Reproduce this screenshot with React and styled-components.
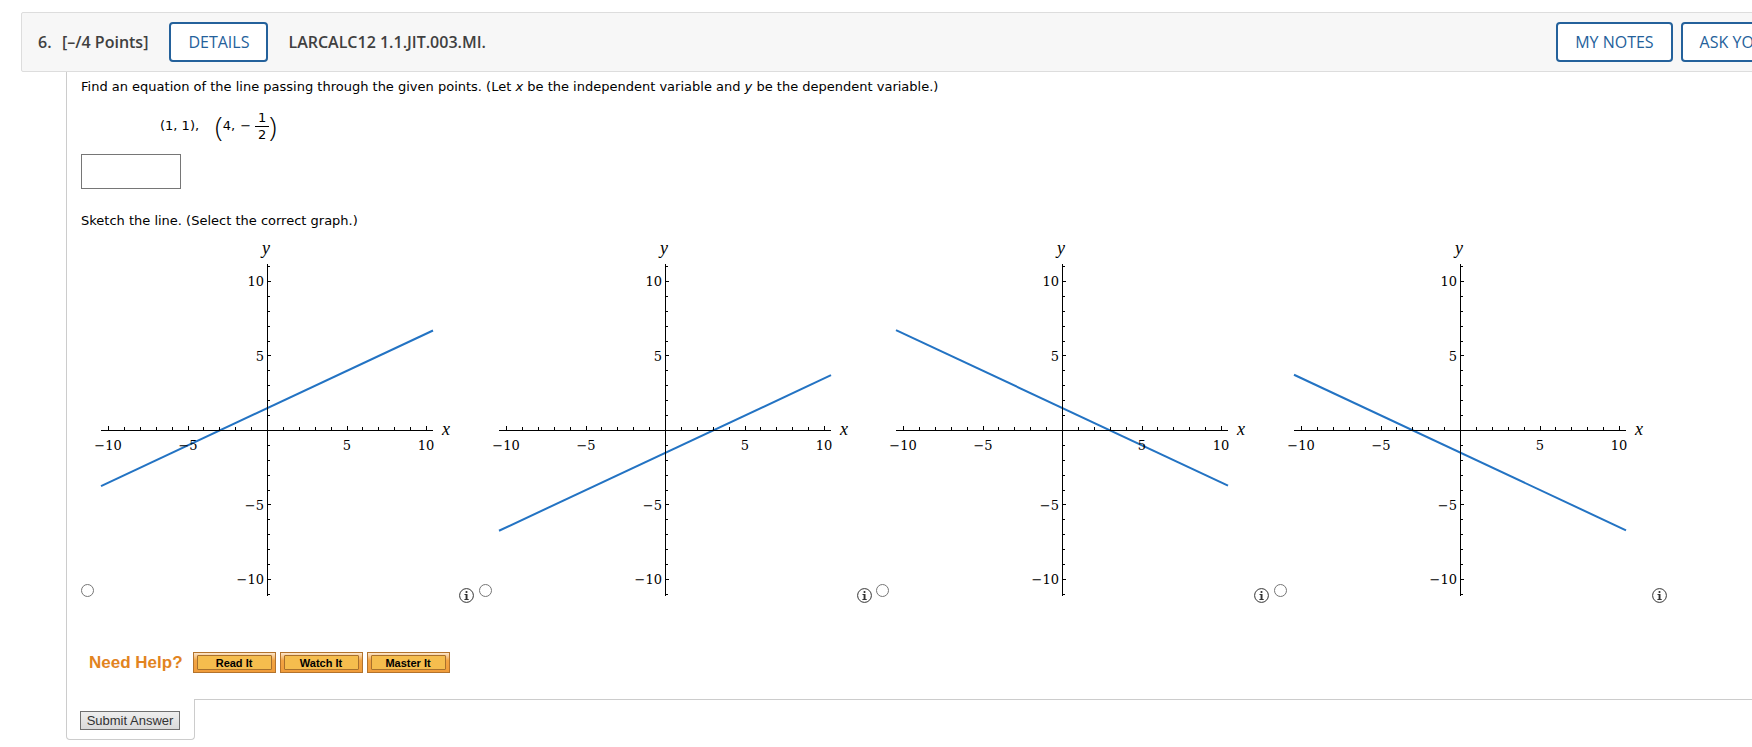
import React, {useState} from 'react'

import styled, {createGlobalStyle} from 'styled-components'

const GlobalStyle = createGlobalStyle`
    * {
        box-sizing: border-box;
    }

    body {
        margin: 0;
        background: #fff;
        color: #000;
        font-family: Verdana, "DejaVu Sans", sans-serif;
        font-size: 13px;
        line-height: 18px;
        overflow-x: hidden;
    }
`;

// slope and y-intercept of every choice
const choices = [
    {slope: 0.5, intercept: 1.5},
    {slope: 0.5, intercept: -1.5},
    {slope: -0.5, intercept: 1.5},
    {slope: -0.5, intercept: -1.5},
];

const units = Array.from({length: 23}, (_, i) => i - 11).filter((n) => n !== 0);
const xUnits = units.filter((n) => Math.abs(n) <= 10);
const labels = [-10, -5, 5, 10];

const toX = (n) => 173.5 + n * 15.9;
const toY = (n) => 189.4 - n * 14.9;
const snap = (n) => Math.floor(n) + 0.5;
const format = (n) => String(n).replace('-', '−');

const Graph = ({slope, intercept}) => {
    const lineY = (x) => toY(slope * x + intercept);
    return (
        <Plot width="365" height="370" viewBox="0 -8 365 370" aria-hidden="true">
            <line
                x1="7" y1={lineY(-10.47)} x2="339" y2={lineY(10.41)}
                stroke="#2373c3" strokeWidth="2"
            />
            <g stroke="#000" strokeWidth="1">
                <path d="M7 189.5H339M173.5 23V355" />
                {xUnits.map((n) => (
                    <path key={n} d={`M${snap(toX(n))} 189v${n % 5 ? -3 : -4}`} />
                ))}
                {units.map((n) => (
                    <path key={n} d={`M174 ${snap(toY(n))}h${n % 5 ? 2 : 3}`} />
                ))}
            </g>
            {labels.map((n) => (
                <text key={n} x={Math.floor(toX(n))} y="209" textAnchor="middle">{format(n)}</text>
            ))}
            {labels.map((n) => (
                <text key={n} x="170" y={Math.round(toY(n)) + 5} textAnchor="end">{format(n)}</text>
            ))}
            <AxisName x="168" y="13">y</AxisName>
            <AxisName x="348" y="194">x</AxisName>
        </Plot>
    )
}

const InfoIcon = () => (
    <svg width="15" height="15" viewBox="0 0 15 15" aria-hidden="true">
        <circle cx="7.5" cy="7.5" r="6.9" fill="none" stroke="#333" />
        <rect x="6.5" y="3" width="2" height="2" rx="0.8" fill="#333" />
        <path d="M5.5 6h3v5h1.2v1H5.4v-1h1.2V7H5.5z" fill="#333" />
    </svg>
)

const App = () => {
    const [answer, setAnswer] = useState('');
    const [picked, setPicked] = useState(null);
    return (
        <>
            <GlobalStyle />
            <Question>
                <Header>
                    <Number>6.</Number>
                    <Points>[–/4 Points]</Points>
                    <HeaderButton type="button">DETAILS</HeaderButton>
                    <Title>LARCALC12 1.1.JIT.003.MI.</Title>
                    <Tools>
                        <HeaderButton type="button">MY NOTES</HeaderButton>
                        <HeaderButton type="button">ASK YOUR TEACHER</HeaderButton>
                    </Tools>
                </Header>
                <Body>
                    <Prompt id="prompt">
                        Find an equation of the line passing through the given points. (Let <i>x</i> be
                        the independent variable and <i>y</i> be the dependent variable.)
                    </Prompt>
                    <GivenPoints>
                        <span>(1, 1),</span>
                        <Pair>
                            <Paren>(</Paren>
                            <span>4,</span>
                            <Minus>−</Minus>
                            <Fraction>
                                <span>1</span>
                                <Denominator>2</Denominator>
                            </Fraction>
                            <Paren>)</Paren>
                        </Pair>
                    </GivenPoints>
                    <AnswerBox
                        type="text"
                        aria-labelledby="prompt"
                        value={answer}
                        onChange={(e) => setAnswer(e.target.value)}
                    />
                    <Prompt id="sketch">Sketch the line. (Select the correct graph.)</Prompt>
                    <Choices role="radiogroup" aria-labelledby="sketch">
                        {choices.map((choice, i) => (
                            <Choice key={i}>
                                <Radio
                                    type="radio"
                                    name="graph"
                                    id={`graph-${i}`}
                                    aria-label={`Graph ${i + 1}`}
                                    checked={picked === i}
                                    onChange={() => setPicked(i)}
                                />
                                <label htmlFor={`graph-${i}`}>
                                    <Graph {...choice} />
                                </label>
                                <InfoButton type="button" aria-label="Graph description">
                                    <InfoIcon />
                                </InfoButton>
                            </Choice>
                        ))}
                    </Choices>
                    <Help>
                        <HelpTitle>Need Help?</HelpTitle>
                        <HelpButton type="button"><span>Read It</span></HelpButton>
                        <HelpButton type="button"><span>Watch It</span></HelpButton>
                        <HelpButton type="button"><span>Master It</span></HelpButton>
                    </Help>
                </Body>
                <Footer>
                    <SubmitTab>
                        <Submit type="button">Submit Answer</Submit>
                    </SubmitTab>
                    <Rule />
                </Footer>
            </Question>
        </>
    )
}

const Question = styled.main`
    padding: 12px 0 8px 21px;
`;

/* the toolbar runs on past the right edge of the window */
const Header = styled.header`
    display: flex;
    align-items: center;
    height: 60px;
    margin-right: -132px;
    padding: 0 16px;
    background: #f7f7f7;
    border: 1px solid #ddd;
    border-radius: 2px;
    color: #404040;
    font-family: "Open Sans", sans-serif;
    font-size: 16px;
    font-weight: 600;
    line-height: 22px;
    white-space: nowrap;
`;

const Number = styled.span`
    width: 24px;
`;

const Points = styled.span`
    margin-right: 21px;
`;

const Title = styled.span`
    margin-left: 20px;
`;

const Tools = styled.div`
    display: flex;
    gap: 8px;
    margin-left: auto;
`;

const HeaderButton = styled.button`
    height: 40px;
    padding: 0 17px;
    background: #fff;
    border: 2px solid #24619b;
    border-radius: 4px;
    color: #24619b;
    font: 400 16px/22px "Open Sans", sans-serif;
    cursor: pointer;
`;

const Body = styled.section`
    margin-left: 45px;
    padding: 6px 0 26px 14px;
    border-left: 1px solid #ccc;
`;

const Prompt = styled.p`
    margin: 0;
`;

const GivenPoints = styled.div`
    display: flex;
    align-items: center;
    gap: 16px;
    height: 32px;
    margin: 14px 0 12px 79px;
`;

const Pair = styled.span`
    display: flex;
    align-items: center;
`;

const Paren = styled.span`
    font-family: "Open Sans", sans-serif;
    font-size: 28px;
    font-weight: 300;
    line-height: 32px;
`;

const Minus = styled.span`
    margin: 0 4px 0 5px;
`;

const Fraction = styled.span`
    display: flex;
    flex-direction: column;
    width: 14px;
    line-height: 16px;
    text-align: center;
`;

const Denominator = styled.span`
    border-top: 1px solid #000;
`;

const AnswerBox = styled.input`
    display: block;
    width: 100px;
    height: 35px;
    margin-bottom: 23px;
    padding: 4px;
    border: 1px solid #767676;
    font: inherit;
`;

const Choices = styled.div`
    display: grid;
    grid-template-columns: repeat(auto-fill, minmax(393px, 1fr));
    max-width: 1590px;
    margin-top: 3px;
`;

const Choice = styled.div`
    display: flex;
    align-items: flex-end;
`;

const Radio = styled.input`
    width: 13px;
    height: 13px;
    margin: 0 0 6px;
`;

const Plot = styled.svg`
    display: block;
    font-family: "DejaVu Serif", serif;
    font-size: 13px;
`;

const AxisName = styled.text`
    font-family: "Liberation Serif", serif;
    font-size: 18px;
    font-style: italic;
`;

const InfoButton = styled.button`
    display: flex;
    padding: 0;
    background: none;
    border: 0;
    cursor: pointer;
`;

const Help = styled.div`
    display: flex;
    align-items: center;
    gap: 4px;
    margin-top: 49px;
    padding-left: 8px;
    font-family: "Liberation Sans", Arial, sans-serif;
`;

const HelpTitle = styled.strong`
    margin-right: 6px;
    color: #e2841f;
    font-size: 17px;
    line-height: 20px;
`;

const HelpButton = styled.button`
    display: flex;
    width: 83px;
    height: 21px;
    padding: 2px 3px;
    background: linear-gradient(#fbe6cc, #f2a443 40%, #f09c3a);
    border: 1px solid #b3732c;
    color: #000;
    font: bold 11px/14px "Liberation Sans", Arial, sans-serif;
    cursor: pointer;

    span {
        flex: 1;
        background: #f5bd4e;
        border: 1px solid #a8702c;
        border-radius: 1px;
    }
`;

const Footer = styled.footer`
    display: flex;
    margin-left: 45px;
`;

const SubmitTab = styled.div`
    padding: 12px 14px 9px 13px;
    border: solid #ccc;
    border-width: 0 1px 1px;
    border-radius: 0 0 4px 4px;
`;

const Rule = styled.div`
    flex: 1;
    border-top: 1px solid #ccc;
`;

const Submit = styled.button`
    display: block;
    width: 100px;
    height: 19px;
    padding: 0;
    background: linear-gradient(#eee, #dadada);
    border: 1px solid #6f6f6f;
    color: #333;
    font: 13px/17px "Liberation Sans", Arial, sans-serif;
    cursor: pointer;
`;

export default App
